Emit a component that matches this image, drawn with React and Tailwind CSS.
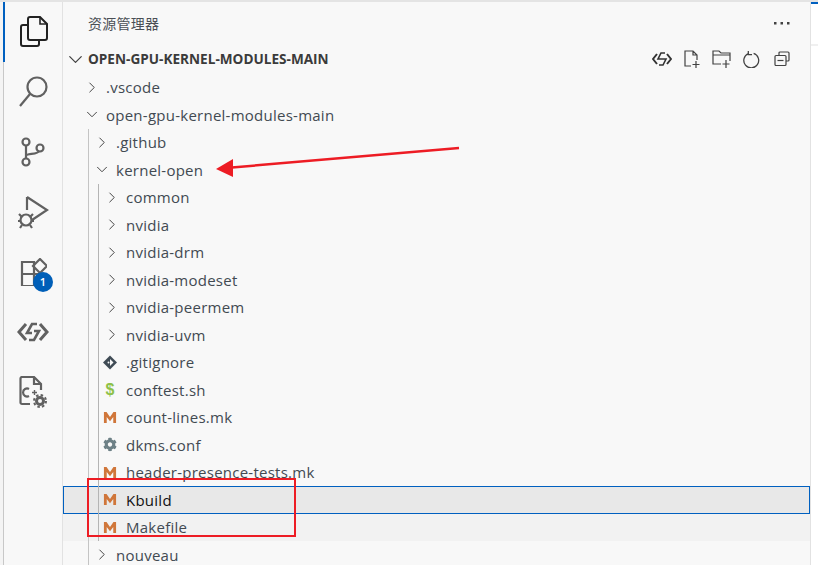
import React from "react";
import { ChevronRight, ChevronDown } from "lucide-react";
import { FaCog } from "react-icons/fa";

const Arrow = ({ open }) =>
  open ? (
    <ChevronDown size={23} strokeWidth={1.3} className="text-[#424242]" />
  ) : (
    <ChevronRight size={23} strokeWidth={1.3} className="text-[#424242]" />
  );

const MakeIcon = () => (
  <svg width="16" height="15" viewBox="0 0 15 14">
    <path d="M1 13V1h2.800L7.500 6.500 11.200 1H14v12h-3V6.500L7.500 11 4 6.500V13z" fill="#d0763a" />
  </svg>
);

const GitIcon = () => (
  <svg width="15" height="15" viewBox="0 0 14 14">
    <path d="M7 0l7 7-7 7-7-7z" fill="#3f4b55" />
    <path d="M7 3.500l3.500 3.500L7 10.500z" fill="#f8f8f8" />
    <circle cx="5.500" cy="7" r="1" fill="#f8f8f8" />
  </svg>
);

const ShellIcon = () => (
  <span className="w-4 text-center text-[16px] leading-none font-bold text-[#8dc149] font-['Liberation_Sans',sans-serif]">$</span>
);

const GearIcon = () => <FaCog size={15} className="text-[#6d8086]" />;

function Row({ depth, label, arrow, icon, selected, hover }) {
  return (
    <div
      className={
        "flex h-[27.5px] items-center " +
        (selected ? "bg-[#e8e8e8] outline outline-1 -outline-offset-1 outline-[#0060c0] " : "") +
        (hover ? "bg-[#f2f2f2] " : "")
      }
    >
      {depth === 1 && <div className="w-[20px] shrink-0" />}
      {depth === 2 && <div className="w-[30px] shrink-0" />}
      {depth === 3 && <div className="w-[40px] shrink-0" />}
      {arrow !== undefined ? (
        <div className="flex w-[21px] shrink-0 items-center justify-center pr-[3px]">
          <Arrow open={arrow} />
        </div>
      ) : (
        <div className="flex w-[21px] shrink-0 items-center justify-center pr-[7px]">{icon}</div>
      )}
      <span className={"ml-[2px] whitespace-nowrap " + (selected ? "text-[#111]" : "text-[#424a52]")}>{label}</span>
    </div>
  );
}

const rows = [
  { depth: 1, label: ".vscode", arrow: false },
  { depth: 1, label: "open-gpu-kernel-modules-main", arrow: true },
  { depth: 2, label: ".github", arrow: false },
  { depth: 2, label: "kernel-open", arrow: true },
  { depth: 3, label: "common", arrow: false },
  { depth: 3, label: "nvidia", arrow: false },
  { depth: 3, label: "nvidia-drm", arrow: false },
  { depth: 3, label: "nvidia-modeset", arrow: false },
  { depth: 3, label: "nvidia-peermem", arrow: false },
  { depth: 3, label: "nvidia-uvm", arrow: false },
  { depth: 3, label: ".gitignore", icon: <GitIcon /> },
  { depth: 3, label: "conftest.sh", icon: <ShellIcon /> },
  { depth: 3, label: "count-lines.mk", icon: <MakeIcon /> },
  { depth: 3, label: "dkms.conf", icon: <GearIcon /> },
  { depth: 3, label: "header-presence-tests.mk", icon: <MakeIcon /> },
  { depth: 3, label: "Kbuild", icon: <MakeIcon />, selected: true },
  { depth: 3, label: "Makefile", icon: <MakeIcon />, hover: true },
  { depth: 2, label: "nouveau", arrow: false },
];

const stroke = { fill: "none", stroke: "#616161", strokeWidth: 2.2 };

function ActivityBar() {
  return (
    <div className="flex w-[60px] shrink-0 flex-col items-center border-l border-r border-l-[#c8c8c8] border-r-[#e2e2e2] bg-[#f8f8f8]">
      <div className="-ml-px flex h-[60px] w-[calc(100%+1px)] items-center justify-center border-l-2 border-[#0060c0]">
        <svg width="30" height="32" viewBox="0 0 30 32">
          <path d="M9 9H4a2 2 0 0 0-2 2v17a2 2 0 0 0 2 2h14a2 2 0 0 0 2-2v-4" fill="none" stroke="#222" strokeWidth="2" />
          <path d="M11 1h10l7 7v14a2 2 0 0 1-2 2H11a2 2 0 0 1-2-2V3a2 2 0 0 1 2-2z" fill="none" stroke="#222" strokeWidth="2" />
          <path d="M21 1v7h7" fill="none" stroke="#222" strokeWidth="1.600" />
        </svg>
      </div>
      <div className="flex h-[60px] items-center justify-center">
        <svg width="30" height="32" viewBox="0 0 30 32">
          <circle cx="19" cy="11" r="9.500" {...stroke} />
          <path d="M12 18L2 30" {...stroke} />
        </svg>
      </div>
      <div className="flex h-[60px] items-center justify-center">
        <svg width="26" height="32" viewBox="0 0 26 32">
          <circle cx="6" cy="6" r="3.500" {...stroke} />
          <circle cx="20" cy="12" r="3.500" {...stroke} />
          <circle cx="6" cy="26" r="3.500" {...stroke} />
          <path d="M6 9.500v13M6 20c0-3 12-1 13-5" {...stroke} />
        </svg>
      </div>
      <div className="flex h-[60px] items-center justify-center">
        <svg width="34" height="34" viewBox="0 0 34 34">
          <path d="M11 2l20 13-15 10" {...stroke} />
          <path d="M11 2v13" {...stroke} />
          <circle cx="10" cy="25" r="5.500" {...stroke} />
          <path d="M3 19l3 3M17 19l-3 3M2 26h3M15 26h3M4 33l2-3M16 33l-2-3" {...stroke} />
        </svg>
      </div>
      <div className="flex h-[60px] items-center justify-center">
        <div className="relative">
          <svg width="28" height="28" viewBox="0 0 28 28">
            <path d="M3 4h12v24H3zM3 16h12M15 16h11v12H15" {...stroke} />
            <path d="M21 1l7 7-7 7-7-7z" {...stroke} />
          </svg>
          <div className="absolute left-[14px] top-[14px] flex h-5 w-5 items-center justify-center rounded-full bg-[#005fb8] text-[11px] font-semibold text-white">1</div>
        </div>
      </div>
      <div className="flex h-[60px] items-center justify-center">
        <svg width="32" height="22" viewBox="0 0 32 22">
          <path d="M9 3L2 11l7 8M23 3l7 8-7 8" {...stroke} strokeWidth="3" />
          <path d="M20 3h-5l-5 9h5M12 19h5l5-9h-5" {...stroke} strokeWidth="2.600" />
        </svg>
      </div>
      <div className="flex h-[60px] items-center justify-center">
        <svg width="28" height="32" viewBox="0 0 28 32">
          <path d="M11 28H3a1.500 1.500 0 0 1-1.500-1.500v-24A1.500 1.500 0 0 1 3 1h12l7 7v6" {...stroke} />
          <path d="M15 1v7h7" {...stroke} />
          <path d="M10 13a4 4 0 1 0 0 7" {...stroke} />
          <path d="M13 16.500h5M15.500 14v5" {...stroke} strokeWidth="1.400" />
          <circle cx="21" cy="25" r="3.500" fill="none" stroke="#616161" strokeWidth="3" />
          <circle cx="21" cy="25" r="6" fill="none" stroke="#616161" strokeWidth="2" strokeDasharray="2.500 2.200" />
        </svg>
      </div>
    </div>
  );
}

function Toolbar() {
  return (
    <div className="flex items-center gap-[11px]">
      <svg width="20" height="14" viewBox="0 0 20 14">
        <path d="M5 2L1 7l4 5M15 2l4 5-4 5" fill="none" stroke="#333" strokeWidth="2" />
        <path d="M13 1H9L6 7h4M7 13h4l3-6h-4" fill="none" stroke="#333" strokeWidth="1.600" />
      </svg>
      <svg width="18" height="18" viewBox="0 0 18 18">
        <path d="M8 16H2V1h8l4 4v5M10 1v4h4M13 11v7M9.500 14.500h7" fill="none" stroke="#424242" strokeWidth="1.200" />
      </svg>
      <svg width="20" height="18" viewBox="0 0 20 18">
        <path d="M9 14H1V1h6l2 2h9v8M1 5h17M14 10v8M10.500 14h7" fill="none" stroke="#424242" strokeWidth="1.200" />
      </svg>
      <svg width="17" height="17" viewBox="0 0 16 16">
        <path d="M5 2.500a7 7 0 1 0 5 -.2M5 0v3.500h3.500" fill="none" stroke="#424242" strokeWidth="1.200" />
      </svg>
      <svg width="16" height="16" viewBox="0 0 16 16" className="ml-[3px]">
        <path d="M5 4V2a1 1 0 0 1 1-1h8a1 1 0 0 1 1 1v7a1 1 0 0 1-1 1h-2" fill="none" stroke="#424242" strokeWidth="1.200" />
        <rect x="1" y="4.500" width="11" height="10" rx="1" fill="none" stroke="#424242" strokeWidth="1.200" />
        <path d="M3.500 9.500h6" stroke="#424242" strokeWidth="1.200" />
      </svg>
    </div>
  );
}

export default function App() {
  return (
    <div className="relative flex h-[565px] w-[818px] overflow-hidden border-t-2 border-[#e4e4e4] bg-[#f8f8f8] font-['Open_Sans','Noto_Sans_CJK_SC',sans-serif] text-[15px] tracking-[0.25px]">
      <div className="w-[3px] shrink-0 bg-[#f4f4f4]" />
      <ActivityBar />
      <div className="min-w-0 flex-1">
        <div className="flex h-[43px] items-center justify-between pl-[25px] pr-[20px]">
          <span className="text-[14px] text-[#4a4f55]">资源管理器</span>
          <svg width="16" height="3" viewBox="0 0 16 3">
            <path d="M0 0h2.500v2.500H0zM6.500 0H9v2.500H6.500zM13 0h2.500v2.500H13z" fill="#424242" />
          </svg>
        </div>
        <div className="flex h-[28.5px] items-center justify-between pr-[20px]">
          <div className="flex items-center">
            <div className="flex w-[25px] items-center justify-center">
              <Arrow open />
            </div>
            <span className="text-[13.600px] font-bold tracking-normal text-[#3b3b3b]">OPEN-GPU-KERNEL-MODULES-MAIN</span>
          </div>
          <Toolbar />
        </div>
        <div className="relative">
          {rows.map((r) => (
            <Row key={r.label} {...r} />
          ))}
          <div className="absolute left-[25px] top-[55px] h-[440px] w-px bg-[#c4c4c4]" />
          <div className="absolute left-[35px] top-[110px] h-[357px] w-px bg-[#b4b4b4]" />
        </div>
      </div>
      <div className="w-[8px] shrink-0 border-l border-[#e2e2e2] bg-white">
        <div className="h-[2px] bg-[#0060c0]" />
        <div className="mt-[40px] h-[2px] bg-[#f0f0f0]" />
      </div>
      <svg width="250" height="40" viewBox="0 0 250 40" className="absolute left-[216px] top-[143px]">
        <path d="M16 22.500L243 3" stroke="#ed1c24" strokeWidth="2.500" />
        <path d="M0 24L17 14v18z" fill="#ed1c24" />
      </svg>
      <div className="absolute left-[87px] top-[476px] h-[59px] w-[209px] border-2 border-[#ed1c24]" />
    </div>
  );
}
